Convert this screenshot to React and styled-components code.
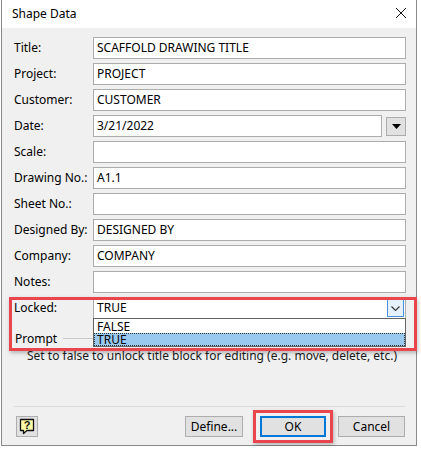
import React from "react"
import styled, { createGlobalStyle } from "styled-components"

const GlobalStyle = createGlobalStyle`
  html, body {
    margin: 0;
    padding: 0;
    background: #ffffff;
  }
  body {
    font-family: "Segoe UI", "Noto Sans", "Liberation Sans", sans-serif;
    font-size: 12px;
    color: #000000;
  }
`

const Window = styled.div`
  position: relative;
  width: 416px;
  height: 446px;
  margin-left: 1px;
  box-sizing: border-box;
  border: 1px solid #8a8a8a;
  border-top: none;
  background: #f0f0f0;
  display: flex;
  flex-direction: column;
`

const TitleBar = styled.div`
  height: 28px;
  flex-shrink: 0;
  background: #ffffff;
  display: flex;
  align-items: center;
  justify-content: space-between;
  padding: 0 9px 0 10px;
`

const TitleText = styled.span`
  font-size: 12px;
  margin-top: -2px;
`

const CloseButton = styled.button`
  border: none;
  background: transparent;
  padding: 0;
  width: 12px;
  height: 12px;
  display: flex;
  margin-top: -3px;
`

const Body = styled.div`
  padding: 9px 11px 0 12px;
`

const Fields = styled.div`
  display: grid;
  grid-template-columns: 79px 313px;
  row-gap: 4px;
  align-items: center;
`

const Label = styled.label`
  font-size: 12px;
  margin-top: -2px;
`

const Field = styled.div`
  position: relative;
  display: flex;
  gap: 4px;
  height: 22px;
`

const Input = styled.div`
  flex: 1;
  height: 22px;
  box-sizing: border-box;
  border: 1px solid #acacac;
  background: #ffffff;
  display: flex;
  align-items: center;
  padding-left: 3px;
  padding-bottom: 2px;
  font-size: 12px;
  white-space: nowrap;
`

const DropButton = styled.button`
  width: 20px;
  height: 19px;
  margin-top: 2px;
  padding: 0;
  box-sizing: border-box;
  border: 1px solid #adadad;
  background: #e1e1e1;
  display: flex;
  align-items: center;
  justify-content: center;
`

const ComboArrow = styled.span`
  position: absolute;
  right: 2px;
  top: 2px;
  width: 17px;
  height: 18px;
  box-sizing: border-box;
  border: 1px solid #4a90d9;
  background: #e5f1fb;
  display: flex;
  align-items: center;
  justify-content: center;
`

const ListPopup = styled.div`
  position: absolute;
  left: 0;
  right: 0;
  top: 21px;
  z-index: 2;
  border: 1px solid #646464;
  background: #ffffff;
  padding: 1px 0 0;
`

const ListItem = styled.div`
  height: 13px;
  line-height: 11px;
  padding-left: 2px;
  font-size: 12px;
  box-sizing: border-box;
  overflow: visible;
  background: ${p => (p.$selected ? "#99c9ef" : "transparent")};
  border: 1px ${p => (p.$selected ? "dotted #333" : "solid transparent")};
`

const PromptRow = styled.div`
  display: flex;
  align-items: center;
  margin-top: 12px;
  height: 14px;
  padding-left: 1px;
`

const PromptLine = styled.div`
  flex: 1;
  height: 0;
  border-top: 1px solid #c8c8c8;
  margin: 1px 0 0 6px;
`

const PromptText = styled.p`
  margin: 2px 0 0 13px;
  font-size: 12px;
  color: #1a1a1a;
`

const Footer = styled.div`
  margin-top: auto;
`

const Separator = styled.div`
  margin: 0 11px 0 12px;
  border-top: 1px solid #dcdcdc;
`

const ButtonRow = styled.div`
  display: flex;
  align-items: center;
  padding: 9px 11px 8px 14px;
`

const HelpButton = styled.button`
  width: 22px;
  height: 21px;
  padding: 0;
  box-sizing: border-box;
  border: 1px solid #adadad;
  background: #e1e1e1;
  display: flex;
  align-items: center;
  justify-content: center;
  margin-right: auto;
`

const Button = styled.button`
  height: 21px;
  width: ${p => p.$w}px;
  margin-left: ${p => p.$gap}px;
  box-sizing: border-box;
  border: ${p => (p.$default ? "2px solid #0078d7" : "1px solid #adadad")};
  background: #e1e1e1;
  font-family: inherit;
  font-size: 12px;
  color: #000;
  padding: 0 0 1px;
`

const Highlight = styled.div`
  position: absolute;
  left: ${p => p.$x}px;
  top: ${p => p.$y}px;
  width: ${p => p.$w}px;
  height: ${p => p.$h}px;
  box-sizing: border-box;
  border: 3px solid #e8464c;
  box-shadow: 1px 2px 4px rgba(0, 0, 0, 0.25);
  pointer-events: none;
  z-index: 3;
`

const rows = [
  ["Title:", "SCAFFOLD DRAWING TITLE"],
  ["Project:", "PROJECT"],
  ["Customer:", "CUSTOMER"],
  ["Date:", "3/21/2022", "date"],
  ["Scale:", ""],
  ["Drawing No.:", "A1.1"],
  ["Sheet No.:", ""],
  ["Designed By:", "DESIGNED BY"],
  ["Company:", "COMPANY"],
  ["Notes:", ""],
]

const CloseIcon = () => (
  <svg width="12" height="12" viewBox="0 0 12 12">
    <path d="M1 1 L11 11 M11 1 L1 11" stroke="#111" strokeWidth="1" fill="none" />
  </svg>
)

const TriangleDown = () => (
  <svg width="9" height="5" viewBox="0 0 9 5">
    <path d="M0 0 H9 L4.5 5 Z" fill="#000" />
  </svg>
)

const Chevron = () => (
  <svg width="9" height="5" viewBox="0 0 9 5">
    <path d="M0.5 0.5 L4.5 4.5 L8.5 0.5" stroke="#333" strokeWidth="1.1" fill="none" />
  </svg>
)

const HelpIcon = () => (
  <svg width="16" height="17" viewBox="0 0 16 17">
    <path
      d="M1.5 1.5 H14.5 V12.5 H8 L4.5 15.5 V12.5 H1.5 Z"
      fill="#fff9a8"
      stroke="#111"
      strokeWidth="1.3"
      strokeLinejoin="round"
    />
    <text x="8" y="11" textAnchor="middle" fontSize="11" fontWeight="700" fontFamily="Liberation Sans, sans-serif" fill="#111">
      ?
    </text>
  </svg>
)

export default function App() {
  return (
    <>
      <GlobalStyle />
      <Window>
        <TitleBar>
          <TitleText>Shape Data</TitleText>
          <CloseButton aria-label="Close">
            <CloseIcon />
          </CloseButton>
        </TitleBar>
        <Body>
          <Fields>
            {rows.map(([label, value, kind]) => (
              <React.Fragment key={label}>
                <Label>{label}</Label>
                <Field>
                  <Input>{value}</Input>
                  {kind === "date" && (
                    <DropButton>
                      <TriangleDown />
                    </DropButton>
                  )}
                </Field>
              </React.Fragment>
            ))}
            <Label>Locked:</Label>
            <Field>
              <Input>TRUE</Input>
              <ComboArrow>
                <Chevron />
              </ComboArrow>
              <ListPopup>
                <ListItem>FALSE</ListItem>
                <ListItem $selected>TRUE</ListItem>
              </ListPopup>
            </Field>
          </Fields>
          <PromptRow>
            <span>Prompt</span>
            <PromptLine />
          </PromptRow>
          <PromptText>Set to false to unlock title block for editing (e.g. move, delete, etc.)</PromptText>
        </Body>
        <Footer>
          <Separator />
          <ButtonRow>
            <HelpButton aria-label="Help">
              <HelpIcon />
            </HelpButton>
            <Button $w={58} $gap={0}>Define...</Button>
            <Button $w={66} $gap={17} $default>OK</Button>
            <Button $w={67} $gap={12}>Cancel</Button>
          </ButtonRow>
        </Footer>
        <Highlight $x={7} $y={297} $w={408} $h={54} />
        <Highlight $x={251} $y={410} $w={80} $h={33} />
      </Window>
    </>
  )
}
